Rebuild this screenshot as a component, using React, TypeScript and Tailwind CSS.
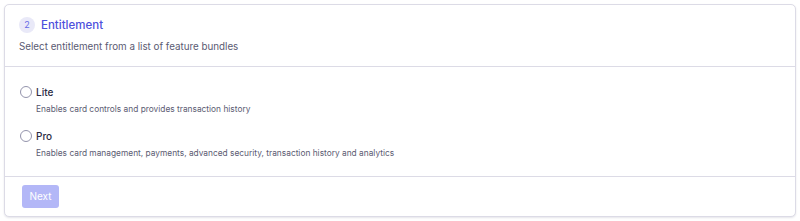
import React from "react";

const options = [
  { label: "Lite", desc: "Enables card controls and provides transaction history" },
  { label: "Pro", desc: "Enables card management, payments, advanced security, transaction history and analytics" },
];

export default function App() {
  return (
    <div className="w-[800px] h-[221px] bg-white p-1" style={{ fontFamily: "Inter, 'Noto Sans', sans-serif" }}>
      <div className="border border-[#dcdbe6] rounded-[5px] shadow-[0_1px_2px_rgba(40,40,80,0.12)] bg-white">
        <div className="px-[14px] pt-[10px] pb-[9px] border-b border-[#dcdbe6]">
          <div className="flex items-center gap-[6px] h-[20px]">
            <span className="w-[16px] h-[16px] rounded-full bg-[#e9e9f8] text-[#6668e6] text-[9px] flex items-center justify-center">2</span>
            <span className="text-[11.5px] font-medium text-[#4d50dc] leading-[20px]">Entitlement</span>
          </div>
          <div className="mt-[2px] text-[9.8px] leading-[20px] text-[#5a5a72]">Select entitlement from a list of feature bundles</div>
        </div>
        <div className="px-[15px] pt-[16px] pb-[15px] flex flex-col gap-[10px]">
          {options.map((o) => (
            <div key={o.label}>
              <label className="flex items-center gap-[4px] h-[18px]">
                <span className="w-[12px] h-[12px] rounded-full border border-[#9494ac] bg-white" />
                <span className="text-[10px] text-[#2b2b44] font-medium">{o.label}</span>
              </label>
              <div className="pl-[16px] text-[8.35px] leading-[16px] text-[#5b5b72]">{o.desc}</div>
            </div>
          ))}
        </div>
        <div className="border-t border-[#dcdbe6] pl-[17px] pt-[8px] pb-[8px]">
          <button className="w-[37px] h-[23px] rounded-[3px] bg-[#b3b7f7] text-white text-[10px] flex items-center justify-center">Next</button>
        </div>
      </div>
    </div>
  );
}
